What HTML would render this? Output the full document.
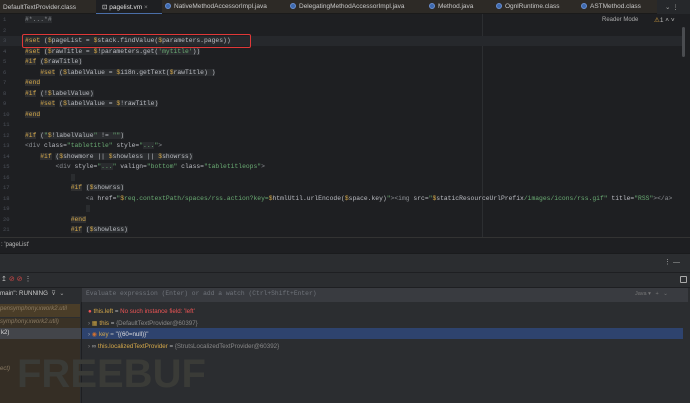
<!DOCTYPE html>
<html><head><meta charset="utf-8"><style>
*{margin:0;padding:0;box-sizing:border-box}
body{width:690px;height:403px;overflow:hidden;background:#1e1f22;font-family:"Liberation Sans",sans-serif;position:relative;color:#bcbec4}
.abs{position:absolute}
.tabs{left:0;top:0;width:690px;height:14px;background:#2d2a26;border-bottom:1px solid #1a1a1a;font-size:6.5px;color:#c8c8c8}
.tab{position:absolute;top:3px;white-space:nowrap}
.ci{display:inline-block;width:6px;height:6px;border-radius:50%;background:#3d6ab0;border:1px solid #6b8fd0;vertical-align:-1px;margin-right:3px}
.code{font-family:"Liberation Mono",monospace;font-size:6.35px;white-space:pre;line-height:10.5px}
.ln{left:3px;width:12px;color:#4b5059;font-family:"Liberation Mono",monospace;font-size:5.5px;line-height:10.5px;white-space:pre}
.k{color:#d4a84a;background:#2f2f30}
.v{color:#d4a84a}
.s{color:#6aab73}
.t{color:#bcbec4}
.g{color:#8a8d92}
.blk{background:#2a2c2f}
</style></head><body>
<div class="abs tabs">
<div class="tab" style="left:-2px">▏DefaultTextProvider.class</div>
<div class="abs" style="left:96px;top:0;width:66px;height:14px;background:#1e1f22;border-bottom:1px solid #4a6ea8"></div>
<div class="tab" style="left:102px;color:#e0e0e0">⊡ pagelist.vm <span style="color:#888">×</span></div>
<div class="tab" style="left:165px"><span class="ci"></span>NativeMethodAccessorImpl.java</div>
<div class="tab" style="left:290px"><span class="ci"></span>DelegatingMethodAccessorImpl.java</div>
<div class="tab" style="left:429px"><span class="ci"></span>Method.java</div>
<div class="tab" style="left:496px"><span class="ci"></span>OgnlRuntime.class</div>
<div class="tab" style="left:581px"><span class="ci"></span>ASTMethod.class</div>
<div class="abs" style="left:657px;top:0;width:33px;height:14px;background:#26282b"></div>
<div class="tab" style="left:665px;color:#aaa">⌄ ⋮</div>
</div>
<div class="abs" style="left:602px;top:17px;font-size:6px;color:#aaa">Reader Mode</div>
<div class="abs" style="left:654px;top:16px;font-size:6.5px;color:#d9a343">⚠<span style="color:#bbb">1 ˄ ˅</span></div>
<div class="abs" style="left:682px;top:27px;width:3px;height:30px;background:#4a4c50;border-radius:2px"></div>
<div class="abs" style="left:482px;top:14px;width:1px;height:224px;background:#2c2e31"></div>
<div class="abs" style="left:0;top:36px;width:682px;height:10px;background:#26282c"></div>
<div class="abs" style="left:22px;top:34px;width:229px;height:14px;border:1.3px solid #e03838;border-radius:2px"></div>
<div class="abs ln" style="top:15px">1
2
3
4
5
6
7
8
9
10
11
12
13
14
15
16
17
18
19
20
21</div>
<div class="abs code" style="left:25px;top:15px"><span class="g blk">#*...*#</span>

<span class="k">#set</span> <span class="blk">(<span class="v">$</span>pageList = <span class="v">$</span>stack.findValue(<span class="v">$</span>parameters.pages))</span>
<span class="k">#set</span> <span class="blk">(<span class="v">$</span>rawTitle = <span class="v">$</span>!parameters.get(<span class="s">'mytitle'</span>))</span>
<span class="k">#if</span> <span class="blk">(<span class="v">$</span>rawTitle)</span>
    <span class="k">#set</span> <span class="blk">(<span class="v">$</span>labelValue = <span class="v">$</span>i18n.getText(<span class="v">$</span>rawTitle) )</span>
<span class="k">#end</span>
<span class="k">#if</span> <span class="blk">(!<span class="v">$</span>labelValue)</span>
    <span class="k">#set</span> <span class="blk">(<span class="v">$</span>labelValue = <span class="v">$</span>!rawTitle)</span>
<span class="k">#end</span>

<span class="k">#if</span> <span class="blk">(<span class="s">"</span><span class="v">$</span>!labelValue<span class="s">"</span> != <span class="s">""</span>)</span>
<span class="g">&lt;div</span> class=<span class="s">"tabletitle"</span> style=<span class="s">"<span class="blk">...</span>"</span><span class="g">&gt;</span>
    <span class="k">#if</span> <span class="blk">(<span class="v">$</span>showmore || <span class="v">$</span>showless || <span class="v">$</span>showrss)</span>
        <span class="g">&lt;div</span> style=<span class="s">"<span class="blk">...</span>"</span> valign=<span class="s">"bottom"</span> class=<span class="s">"tabletitleops"</span><span class="g">&gt;</span>
            <span class="blk"> </span>
            <span class="k">#if</span> <span class="blk">(<span class="v">$</span>showrss)</span>
                <span class="g">&lt;a</span> href=<span class="s">"<span class="v">$</span>req.contextPath/spaces/rss.action?key=<span class="v">$</span><span class="t">htmlUtil.urlEncode(<span class="v">$</span>space.key)</span>"</span><span class="g">&gt;&lt;img</span> src=<span class="s">"<span class="v">$</span><span class="t">staticResourceUrlPrefix</span>/images/icons/rss.gif"</span> title=<span class="s">"RSS"</span><span class="g">&gt;&lt;/a&gt;</span>
                <span class="blk"> </span>
            <span class="k">#end</span>
            <span class="k">#if</span> <span class="blk">(<span class="v">$</span>showless)</span></div>
<div class="abs" style="left:0;top:237px;width:690px;height:1px;background:#333"></div>
<div class="abs" style="left:0;top:238px;width:690px;height:15px;background:#1e1f22;font-size:6px;color:#bbb;padding:4px 0 0 1px">: 'pageList'</div>
<div class="abs" style="left:0;top:253px;width:690px;height:150px;background:#2b2d30;border-top:1px solid #1a1b1d"></div>
<div class="abs" style="left:664px;top:258px;font-size:7px;color:#aaa">⋮ —</div>
<div class="abs" style="left:0;top:272px;width:690px;height:1px;background:#1e1f22"></div>
<div class="abs" style="left:1px;top:275px;font-size:7px;color:#bbb">↥ <span style="color:#d04848">⊘ ⊘</span> ⋮</div>
<div class="abs" style="left:680px;top:276px;width:7px;height:7px;border:1px solid #aaa;border-radius:1px"></div>
<div class="abs" style="left:0;top:287px;width:690px;height:1px;background:#1e1f22"></div>
<div class="abs" style="left:0;top:290px;font-size:6.2px;color:#ccc">main": RUNNING &nbsp;<span style="color:#aaa">⊽ &nbsp;⌄</span></div>
<div class="abs" style="left:82px;top:288px;width:606px;height:14px;background:#393b40"></div>
<div class="abs code" style="left:86px;top:289px;color:#6f737a;font-size:6.3px">Evaluate expression (Enter) or add a watch (Ctrl+Shift+Enter)</div>
<div class="abs" style="left:635px;top:291px;font-size:5.5px;color:#777">Java ▾ &nbsp; + &nbsp; ⌄</div>
<div class="abs" style="left:81px;top:302px;width:1px;height:101px;background:#1e1f22"></div>
<div class="abs" style="left:0;top:304px;width:80px;height:13px;background:#4a3d28"></div>
<div class="abs" style="left:0;top:306px;font-size:6px;color:#8a7a62;font-style:italic">pensymphony.xwork2.util</div>
<div class="abs" style="left:0;top:318px;width:80px;height:10px;background:#3a3226"></div>
<div class="abs" style="left:0;top:319px;font-size:6px;color:#8a7a62;font-style:italic">symphony.xwork2.util)</div>
<div class="abs" style="left:0;top:328px;width:81px;height:11px;background:#43454a"></div>
<div class="abs" style="left:1px;top:330px;font-size:6px;color:#ddd">k2)</div>
<div class="abs" style="left:0;top:339px;width:80px;height:64px;background:#352e25"></div>
<div class="abs" style="left:0;top:366px;font-size:6px;color:#8a7a62;font-style:italic">ect)</div>
<div class="abs" style="left:17px;top:351px;font-size:40px;line-height:46px;font-weight:bold;color:#3a3b37">FREEBUF</div>
<div class="abs" style="left:82px;top:328px;width:601px;height:11px;background:#2e436e"></div>
<div class="abs" style="left:88px;top:306px;font-size:6.2px;line-height:11.5px;white-space:pre;color:#bbb"><span style="color:#e55">●</span> <span style="color:#d4a84a">this.left</span> = <span style="color:#e55">No such instance field: 'left'</span>
<span style="color:#888">›</span> <span style="color:#c8a040">▦</span> <span style="color:#d4a84a">this</span> = <span style="color:#888">{DefaultTextProvider@60397}</span>
<span style="color:#aaa">›</span> <span style="color:#d07030">◉</span> <span style="color:#d4a84a">key</span> = <span style="color:#ddd">"{(60=null)}"</span>
<span style="color:#888">›</span> <span style="color:#aaa">∞</span> <span style="color:#d4a84a">this.localizedTextProvider</span> = <span style="color:#888">{StrutsLocalizedTextProvider@60392}</span></div>
</body></html>
